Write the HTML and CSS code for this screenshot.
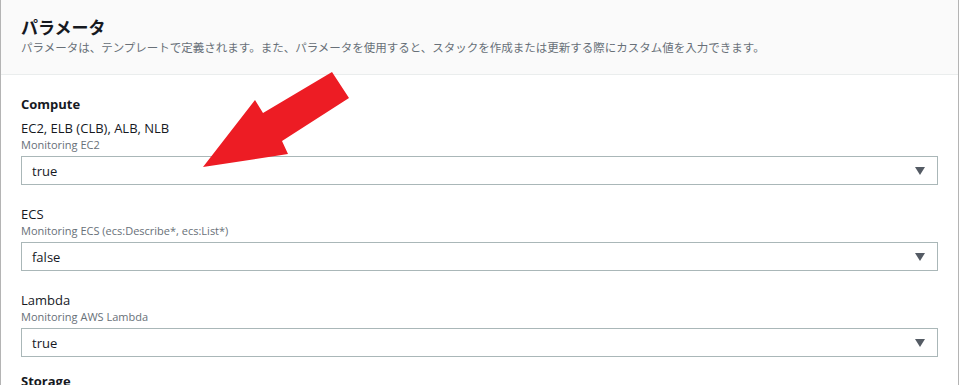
FILE: index.html
```html
<!DOCTYPE html>
<html lang="ja">
<head>
<meta charset="utf-8">
<link rel="stylesheet" href="styles.css">
</head>
<body>
<div class="panel">
  <div class="panel-header">
    <h2 class="title">パラメータ</h2>
    <p class="subtitle">パラメータは、テンプレートで定義されます。また、パラメータを使用すると、スタックを作成または更新する際にカスタム値を入力できます。</p>
  </div>
  <div class="panel-body">
    <h3 class="section">Compute</h3>
    <div class="field">
      <div class="label">EC2, ELB (CLB), ALB, NLB</div>
      <div class="desc">Monitoring EC2</div>
      <div class="select"><span>true</span><span class="caret"></span></div>
    </div>
    <div class="field">
      <div class="label">ECS</div>
      <div class="desc">Monitoring ECS (ecs:Describe*, ecs:List*)</div>
      <div class="select"><span>false</span><span class="caret"></span></div>
    </div>
    <div class="field">
      <div class="label">Lambda</div>
      <div class="desc">Monitoring AWS Lambda</div>
      <div class="select"><span>true</span><span class="caret"></span></div>
    </div>
    <h3 class="section storage">Storage</h3>
  </div>
  <svg class="arrow" width="960" height="385" viewBox="0 0 960 385">
    <polygon points="203,167 255,100 263,113 332,72 349,98 282,141 288,154" fill="#ed1c24"/>
  </svg>
</div>
</body>
</html>
```
FILE: styles.css
```css
html, body {
  margin: 0;
  padding: 0;
  background: #ffffff;
  overflow: hidden;
}
body {
  font-family: "Open Sans", "Noto Sans CJK JP", sans-serif;
  color: #16191f;
}
.panel {
  position: relative;
  width: 959px;
  height: 385px;
  box-sizing: border-box;
  border-left: 1px solid #b4b4b4;
  border-right: 1px solid #b4b4b4;
  overflow: hidden;
}
.panel-header {
  background: #fafafa;
  border-bottom: 1px solid #eaeded;
  padding: 16px 20px 20px 20px;
  height: 75px;
  box-sizing: border-box;
}
.title {
  margin: 0;
  font-family: "Noto Sans CJK JP", sans-serif;
  font-size: 17px;
  line-height: 22px;
  font-weight: 700;
  color: #16191f;
}
.subtitle {
  margin: 1px 0 0 0;
  font-family: "Noto Sans CJK JP", sans-serif;
  font-size: 11.5px;
  line-height: 16px;
  color: #687078;
  white-space: nowrap;
}
.panel-body {
  padding: 19px 20px 0 20px;
  display: flex;
  flex-direction: column;
}
.section {
  margin: 0;
  font-size: 13px;
  line-height: 20px;
  font-weight: 700;
  color: #16191f;
}
.field {
  display: flex;
  flex-direction: column;
  margin-top: 5px;
}
.field + .field {
  margin-top: 20px;
}
.label {
  font-size: 13px;
  line-height: 18px;
  color: #16191f;
}
.desc {
  font-size: 11px;
  line-height: 16px;
  color: #687078;
}
.select {
  margin-top: 3px;
  height: 29px;
  box-sizing: border-box;
  border: 1px solid #aab7b8;
  display: flex;
  align-items: center;
  justify-content: space-between;
  padding: 0 12px 0 10px;
  font-size: 13px;
  color: #16191f;
}
.caret {
  width: 0;
  height: 0;
  border-left: 5px solid transparent;
  border-right: 5px solid transparent;
  border-top: 8px solid #545b64;
}
.storage {
  margin-top: 14px;
}
.arrow {
  position: absolute;
  left: -1px;
  top: 0;
  pointer-events: none;
}
```
